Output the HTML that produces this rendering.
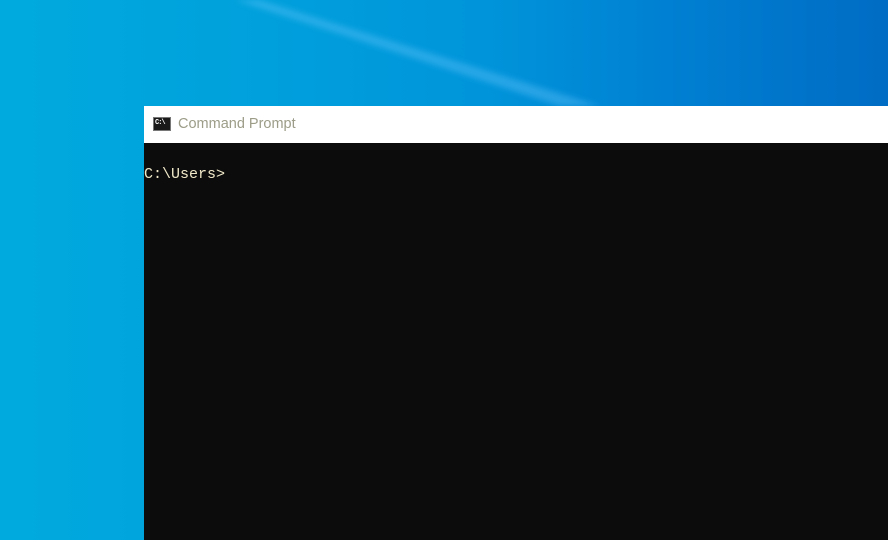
<!DOCTYPE html>
<html><head><meta charset="utf-8"><style>
html,body{margin:0;padding:0;width:888px;height:540px;overflow:hidden}
body{position:relative;background:linear-gradient(90deg,#00aade 0%,#00a0dc 30%,#0094da 55%,#0080d2 75%,#006cc4 100%)}
svg.bg{position:absolute;left:0;top:0}
.win{position:absolute;left:144px;top:106px;width:744px;height:434px}
.title{height:37px;background:#fff;position:relative}
.icon{position:absolute;left:9px;top:11px;width:18px;height:14px;background:#1a1a1a;border:1px solid #777;box-sizing:border-box}
.icon span{position:absolute;left:1px;top:1px;font:bold 7px "Liberation Mono",monospace;color:#fff;letter-spacing:-1px}
.ttext{position:absolute;left:34px;top:10px;font:14.5px "Liberation Sans",sans-serif;color:#9c9c88}
.con{height:397px;background:#0c0c0c;position:relative}
.prompt{position:absolute;left:0;top:23px;font:15px "Liberation Mono",monospace;color:#f0e8c8}
</style></head><body>
<svg class="bg" width="888" height="540"><defs><filter id="b"><feGaussianBlur stdDeviation="3"/></filter></defs>
<polygon points="235,0 260,0 600,106 560,106" fill="rgba(110,200,255,0.35)" filter="url(#b)"/>
</svg>
<div class="win">
<div class="title"><div class="icon"><span>C:\</span></div><div class="ttext">Command Prompt</div></div>
<div class="con"><div class="prompt">C:\Users&gt;</div></div>
</div>
</body></html>
